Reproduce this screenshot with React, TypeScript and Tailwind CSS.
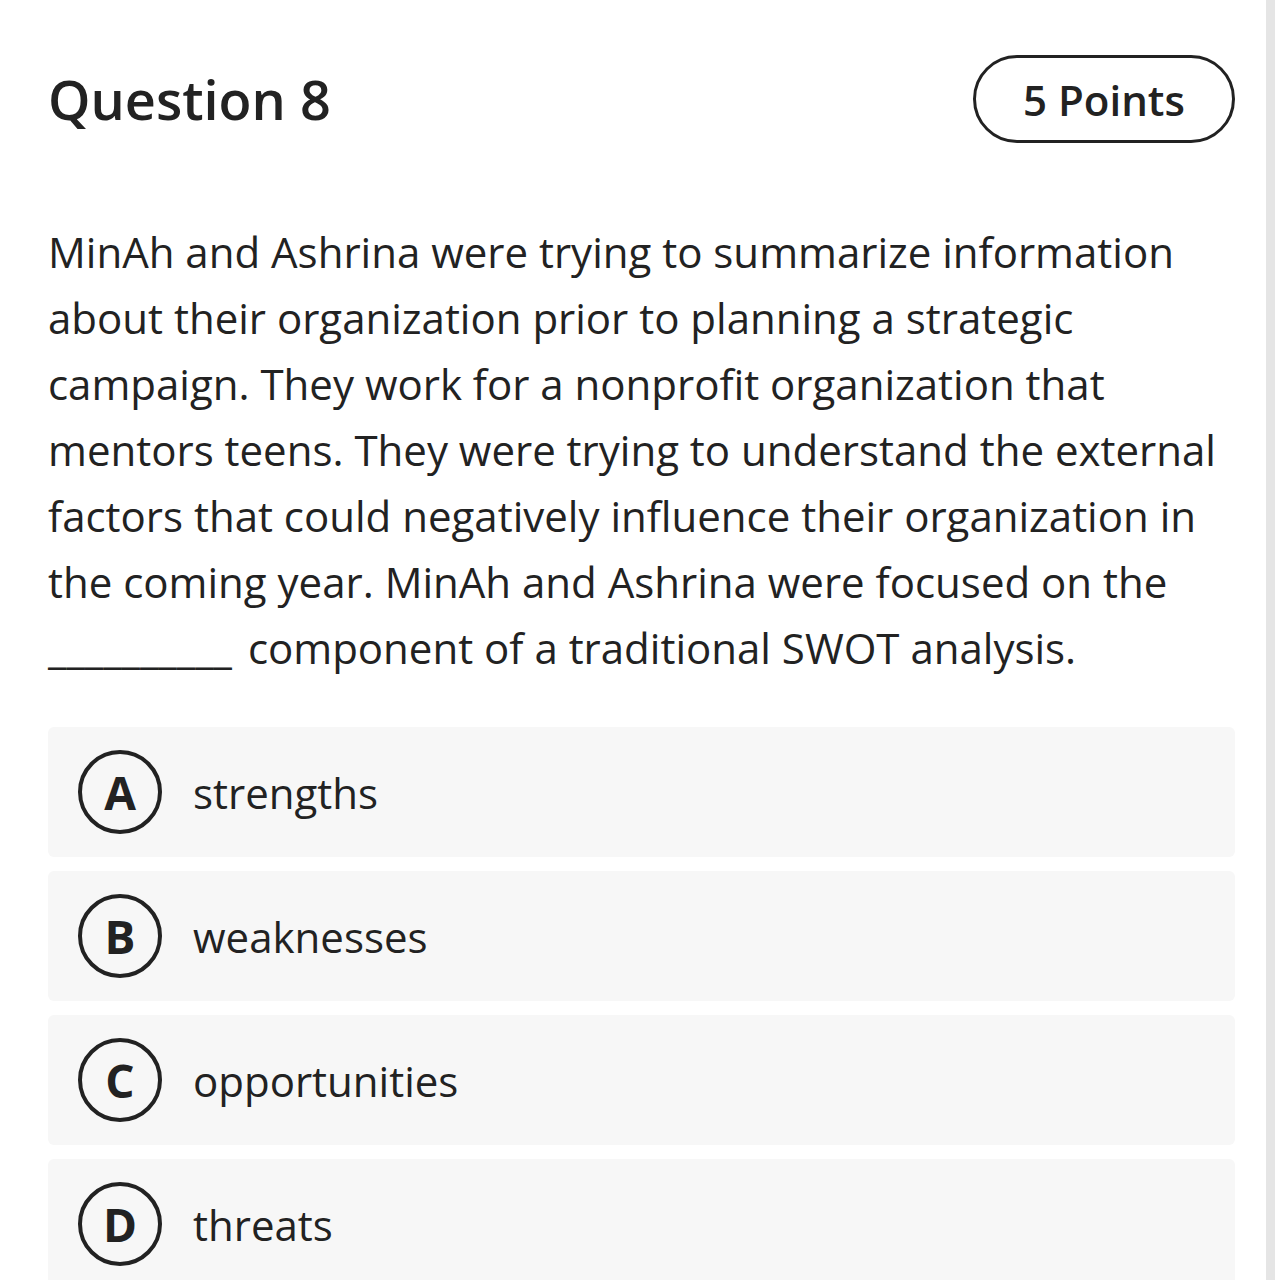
const OPTIONS = [
  { key: "A", label: "strengths" },
  { key: "B", label: "weaknesses" },
  { key: "C", label: "opportunities" },
  { key: "D", label: "threats" },
];

export default function App() {
  return (
    <div className="flex min-h-[1280px] bg-white text-[#222] font-['Open_Sans',sans-serif]">
      <div className="w-[1266px] pl-[48px] pr-[31px] pt-[55px]">
        <div className="flex items-center justify-between">
          <h1 className="text-[54px] font-semibold leading-none">Question 8</h1>
          <div className="flex h-[88px] w-[262px] items-center justify-center rounded-full border-[3px] border-[#222] text-[42px] font-semibold">
            5 Points
          </div>
        </div>

        <p className="mt-[76px] text-[42px] leading-[66px]">
          MinAh and Ashrina were trying to summarize information about their organization prior to planning a
          strategic campaign. They work for a nonprofit organization that mentors teens. They were trying to
          understand the external factors that could negatively influence their organization in the coming year.
          MinAh and Ashrina were focused on the{" "}
          <span className="mr-[5px]">__________</span> component of a traditional SWOT analysis.
        </p>

        <div className="mt-[46px] flex flex-col gap-[14px]">
          {OPTIONS.map((o) => (
            <div key={o.key} className="flex h-[130px] items-center gap-[31px] rounded-md bg-[#f7f7f7] pl-[30px]">
              <div className="flex h-[84px] w-[84px] shrink-0 items-center justify-center rounded-full border-[4px] border-[#222] text-[46px] font-bold leading-none">
                {o.key}
              </div>
              <span className="text-[42px]">{o.label}</span>
            </div>
          ))}
        </div>
      </div>
      <div className="w-[9px] bg-[#e5e5e5]" />
    </div>
  );
}
